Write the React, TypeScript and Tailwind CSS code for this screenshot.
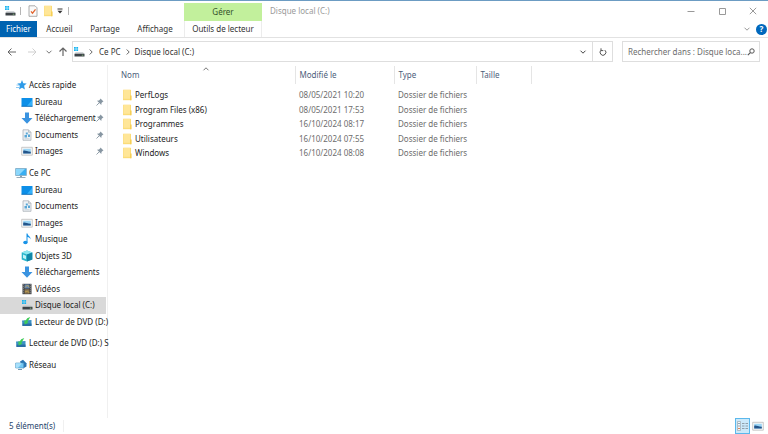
import { useState } from "react";
import type { ReactNode } from "react";

type IconName =
  | "star"
  | "desktop"
  | "download"
  | "document"
  | "picture"
  | "computer"
  | "music"
  | "cube"
  | "video"
  | "drive"
  | "dvd"
  | "network"
  | "folder";

const shapes: Record<IconName, ReactNode> = {
  star: (
    <>
      <path d="M7 1 8.300 4.200l3.400.3-2.600 2.300.8 3.700L7 8.800 4 10.500l.8-3.700L2.300 4.500l3.400-.3z" fill="#2f9be8" />
      <path d="M1.500 6h3M1 8.500h3" stroke="#6bbaf0" strokeWidth=".8" />
    </>
  ),
  desktop: (
    <>
      <path d="M.5 2h11v8.500H.5z" fill="#0d8fe8" />
      <path d="M6 10 11 4v6z" fill="#35b2fb" />
      <path d="M.5 10.300h11" stroke="#0b65ae" strokeWidth=".8" />
    </>
  ),
  download: <path d="M4 .5h4v5.500h3.500L6 11.700.5 6H4z" fill="#3a93e0" />,
  document: (
    <>
      <path d="M2 .8h5.500L10 3.300v8H2z" fill="#eef2f5" stroke="#a4abb1" strokeWidth=".7" />
      <path d="M7.500.8v2.500H10" fill="#d5dade" stroke="#a4abb1" strokeWidth=".6" />
      <path d="M4.800 3.500h2v2h-2zM3.500 6H6v2.500H3.500zM7 5.500h2V8H7z" fill="#5aa7d6" />
      <path d="M3.500 9.800h5" stroke="#b6c5cf" strokeWidth=".7" />
    </>
  ),
  picture: (
    <>
      <path d="M.7 2.300h10.600v7.900H.7z" fill="#f7f7f7" stroke="#b5b5b5" strokeWidth=".7" />
      <path d="M2.200 3.800h7.600v4.800H2.200z" fill="#9bd5f5" />
      <path d="M2.200 5.800c2-.9 3.500.9 7.600.9v1.900H2.200z" fill="#24558a" />
    </>
  ),
  computer: (
    <>
      <path d="M.6 1.500h10.800v7H.6z" fill="#38aef2" stroke="#7fa6bd" strokeWidth=".7" />
      <path d="M1 2h9L4 8H1z" fill="#8bd7fb" />
      <path d="M5 8.800h2V10H5z" fill="#8ca0ad" />
      <path d="M1.500 10.500h9" stroke="#9aacb9" />
    </>
  ),
  music: (
    <>
      <path d="M5.500 9.500V.5h1c.2 2.500 3.500 2.700 3 6-.4-1.500-1.500-2.300-3-2.500v5.500z" fill="#1893e8" />
      <ellipse cx="4.400" cy="9.500" rx="2.200" ry="1.800" fill="#1893e8" />
    </>
  ),
  cube: (
    <>
      <path d="M6 .5 11.300 2.500v7L6 11.600.7 9.500v-7z" fill="#29b4cb" />
      <path d="M6 .5 11.300 2.500 6 4.500.7 2.500z" fill="#8de7ef" />
      <path d="M6 4.500v7.100l5.300-2.100v-7z" fill="#1187a8" />
      <path d="M2 4.500 5 5.700v3.500L2 8z" fill="#c1f3f6" />
    </>
  ),
  video: (
    <>
      <path d="M1.500.8h9v10.400h-9z" fill="#35383d" />
      <path d="M3.500 1.300h5v4.200h-5z" fill="#6585ad" />
      <path d="M3.500 6.300h5v4.400h-5z" fill="#8d7652" />
      <path d="M4 4.500 6.500 2l1.800 2.500M4 9l2.500-1 1.800 2" stroke="#c6a84f" strokeWidth=".8" fill="none" />
      <path d="M2.500 1.300v9.500M9.500 1.300v9.500" stroke="#bbb" strokeWidth=".7" strokeDasharray="1 1" />
    </>
  ),
  drive: (
    <>
      <path d="M1 1h1.800v1.800H1zM3.300 1h1.800v1.800H3.300zM1 3.300h1.800v1.800H1zM3.300 3.300h1.800v1.800H3.300z" fill="#16b4f1" />
      <path d="M2.500 6.300h7.500l1.500 1.700H1.500z" fill="#c9cdd0" />
      <path d="M1.500 7.800h10v2.700h-10z" fill="#3c4247" />
      <path d="M8.800 9.200h1.500" stroke="#9bdd89" strokeWidth=".7" />
    </>
  ),
  dvd: (
    <>
      <path d="M1 4.500 10.500 4v6H1.500z" fill="#3c91c4" />
      <path d="M1.500 7.500h9V10h-9z" fill="#2a6fa5" />
      <path d="M9.300 1 6.200 2.300 4.500 4.800 3.300 4.200 3.600 8.500 7.500 6.700 6.300 6z" fill="#3fcb58" />
    </>
  ),
  network: (
    <>
      <path d="M5 2.500 8 .8l3.500 3.400v3.300L8 9.500z" fill="#2a76b4" />
      <path d="M.7 4h8v5h-8z" fill="#73c8f4" stroke="#4a90bd" strokeWidth=".6" />
      <path d="M1 4.300h6L3 8.700H1z" fill="#a8e0fb" />
      <path d="M3 10.500h4" stroke="#6f98b3" />
    </>
  ),
  folder: (
    <>
      <path d="M2 .8h8v10.400H2z" fill="#fbdc78" />
      <path d="M2.500.8H9v9H2.500z" fill="#ffe698" />
      <path d="M9 6.500h1.600v4.700H9z" fill="#f6cf55" />
    </>
  ),
};

function Icon({ name }: { name: IconName }) {
  return (
    <svg viewBox="0 0 12 12" className="size-3 shrink-0" aria-hidden="true">
      {shapes[name]}
    </svg>
  );
}

type NavItem = { label: string; icon: IconName; root?: boolean; pinned?: boolean };

const groups: NavItem[][] = [
  [
    { label: "Accès rapide", icon: "star", root: true },
    { label: "Bureau", icon: "desktop", pinned: true },
    { label: "Téléchargements", icon: "download", pinned: true },
    { label: "Documents", icon: "document", pinned: true },
    { label: "Images", icon: "picture", pinned: true },
  ],
  [
    { label: "Ce PC", icon: "computer", root: true },
    { label: "Bureau", icon: "desktop" },
    { label: "Documents", icon: "document" },
    { label: "Images", icon: "picture" },
    { label: "Musique", icon: "music" },
    { label: "Objets 3D", icon: "cube" },
    { label: "Téléchargements", icon: "download" },
    { label: "Vidéos", icon: "video" },
    { label: "Disque local (C:)", icon: "drive" },
    { label: "Lecteur de DVD (D:)", icon: "dvd" },
  ],
  [{ label: "Lecteur de DVD (D:) S", icon: "dvd", root: true }],
  [{ label: "Réseau", icon: "network", root: true }],
];

const files = [
  { name: "PerfLogs", date: "08/05/2021 10:20" },
  { name: "Program Files (x86)", date: "08/05/2021 17:53" },
  { name: "Programmes", date: "16/10/2024 08:17" },
  { name: "Utilisateurs", date: "16/10/2024 07:55" },
  { name: "Windows", date: "16/10/2024 08:08" },
];

function Pin() {
  return (
    <svg viewBox="0 0 8 8" className="size-2 shrink-0" aria-hidden="true">
      <path d="M4.500.5 7.500 3.500 6.500 4 5.500 5 5.300 7 1 2.700l2-.2 1-1z" fill="#8796a2" />
      <path d="M3.200 4.800.5 7.500" stroke="#8796a2" strokeWidth=".9" />
    </svg>
  );
}

function Chevron({ className }: { className?: string }) {
  return (
    <svg viewBox="0 0 8 8" className={className} fill="none" stroke="currentColor" aria-hidden="true">
      <path d="m1.500 2.700 2.500 2.500 2.500-2.500" />
    </svg>
  );
}

function TitleBar() {
  return (
    <div className="flex h-5 items-stretch">
      <div className="flex w-[184px] shrink-0 items-center pl-1">
        <Icon name="drive" />
        <span className="ml-1 h-2 w-px bg-[#b5b5b5]" />
        <button aria-label="Propriétés" className="ml-[6px]">
          <svg viewBox="0 0 12 12" className="size-3" fill="none">
            <path d="M2 .8h6l2 2v8.500H2z" fill="#fafafa" stroke="#989898" strokeWidth=".8" />
            <path d="m4 6.300 1.500 1.900 3-3.900" stroke="#e2622b" strokeWidth="1.200" />
          </svg>
        </button>
        <button aria-label="Nouveau dossier" className="ml-[3px]">
          <Icon name="folder" />
        </button>
        <button aria-label="Personnaliser" className="ml-[2px]">
          <svg viewBox="0 0 8 8" className="size-2">
            <path d="M1.500 2h5" stroke="#333" />
            <path d="M1.500 3.800h5L4 6.500z" fill="#333" />
          </svg>
        </button>
        <span className="ml-1 h-2 w-px bg-[#b5b5b5]" />
      </div>
      <div className="mt-[2px] flex w-[78px] shrink-0 items-center justify-center bg-[#c2f09c] text-[#33502a]">Gérer</div>
      <h1 className="ml-2 flex-1 self-center text-[#9a9a9a]">Disque local (C:)</h1>
      <div className="flex items-center text-[#999]">
        <button aria-label="Réduire" className="flex w-[31px] justify-center">
          <svg viewBox="0 0 8 8" className="size-2" stroke="currentColor">
            <path d="M.5 4.500h7" />
          </svg>
        </button>
        <button aria-label="Agrandir" className="flex w-[31px] justify-center">
          <svg viewBox="0 0 8 8" className="size-2" stroke="currentColor" fill="none">
            <path d="M1.500 1.500h6v6h-6z" />
          </svg>
        </button>
        <button aria-label="Fermer" className="flex w-[31px] justify-center">
          <svg viewBox="0 0 8 8" className="size-2" stroke="currentColor">
            <path d="m.8.8 6.400 6.400m0-6.400L.8 7.200" />
          </svg>
        </button>
      </div>
    </div>
  );
}

function Ribbon() {
  return (
    <nav className="flex h-[17px] items-stretch border-b border-[#e2e2e2] text-[#333]">
      <button className="w-[37px] bg-[#0063b1] text-white">Fichier</button>
      <button className="w-[45px]">Accueil</button>
      <button className="w-[46px]">Partage</button>
      <button className="w-[54px]">Affichage</button>
      <button className="ml-[2px] w-[78px] border-x border-[#ececec]">Outils de lecteur</button>
      <div className="ml-auto flex items-center gap-[5px] pr-px">
        <button aria-label="Développer le ruban" className="text-[#999]">
          <Chevron className="size-2" />
        </button>
        <button
          aria-label="Aide"
          className="flex size-[11px] items-center justify-center rounded-full bg-[#0068bd] font-bold text-white"
        >
          ?
        </button>
      </div>
    </nav>
  );
}

function AddressBar() {
  return (
    <div className="flex h-[27px] items-center pr-2 text-[#333]">
      <div className="flex w-[72px] shrink-0 items-center pl-[7px]">
        <button aria-label="Précédent" className="text-[#666]">
          <svg viewBox="0 0 10 10" className="size-[10px]" fill="none" stroke="currentColor">
            <path d="M9 5H1m3.500-3.500L1 5l3.500 3.500" />
          </svg>
        </button>
        <button aria-label="Suivant" className="ml-[10px] text-[#cfcfcf]">
          <svg viewBox="0 0 10 10" className="size-[10px]" fill="none" stroke="currentColor">
            <path d="M1 5h8M5.500 1.500 9 5 5.500 8.500" />
          </svg>
        </button>
        <button aria-label="Emplacements récents" className="ml-2 text-[#777]">
          <Chevron className="size-2" />
        </button>
        <button aria-label="Dossier parent" className="ml-[5px] text-[#666]">
          <svg viewBox="0 0 10 10" className="size-[10px]" fill="none" stroke="currentColor" strokeWidth="1.200">
            <path d="M5 9V1M1.500 4.500 5 1l3.500 3.500" />
          </svg>
        </button>
      </div>
      <div className="flex h-[21px] flex-1 items-center border border-[#dedede]">
        <Icon name="drive" />
        <Chevron className="ml-[2px] size-2 -rotate-90 text-[#666]" />
        <button className="ml-1">Ce PC</button>
        <Chevron className="ml-[3px] size-2 -rotate-90 text-[#666]" />
        <button className="ml-[3px]">Disque local (C:)</button>
        <button aria-label="Historique" className="mr-[5px] ml-auto text-[#444]">
          <Chevron className="size-2" />
        </button>
        <button aria-label="Actualiser" className="flex w-5 items-center justify-center self-stretch border-l border-[#dedede] text-[#555]">
          <svg viewBox="0 0 8 8" className="size-2" fill="none" stroke="currentColor">
            <path d="M2.300 2A2.900 2.900 0 1 0 5.800 2.100M2 .3v2.300h2.300" />
          </svg>
        </button>
      </div>
      <label className="ml-[9px] flex h-[21px] w-[138px] items-center border border-[#dedede] pr-1 pl-[5px]">
        <input
          aria-label="Rechercher"
          placeholder="Rechercher dans : Disque loca..."
          className="min-w-0 flex-1 outline-none placeholder:text-[#6d6d6d]"
        />
        <svg viewBox="0 0 8 8" className="size-2 shrink-0" fill="none" stroke="#555">
          <circle cx="5" cy="3" r="2.200" />
          <path d="M3.400 4.600.8 7.200" strokeWidth="1.200" />
        </svg>
      </label>
    </div>
  );
}

function Sidebar() {
  const [selected, setSelected] = useState("1-8");

  return (
    <aside className="w-[108px] shrink-0 border-r border-[#f0f0f0] pt-3 pr-px">
      <div className="flex flex-col gap-[5px]">
        {groups.map((items, g) => (
          <ul key={g}>
            {items.map((item, i) => (
              <li key={item.label} className="odd:h-[17px] even:h-4">
                <button
                  onClick={() => setSelected(`${g}-${i}`)}
                  className={`flex h-full w-full items-center gap-[2px] pb-px text-left text-[#1c1c1c] ${item.root ? "pl-[15px]" : "pl-[21px]"} ${
                    selected === `${g}-${i}` ? "bg-[#d9d9d9]" : ""
                  }`}
                >
                  <Icon name={item.icon} />
                  <span className="min-w-0 flex-1 whitespace-nowrap">{item.label}</span>
                  {item.pinned && (
                    <span className="bg-white pr-[2px]">
                      <Pin />
                    </span>
                  )}
                </button>
              </li>
            ))}
          </ul>
        ))}
      </div>
    </aside>
  );
}

function FileTable() {
  return (
    <main className="min-w-0 flex-1 pt-px">
      <table className="w-full table-fixed border-collapse text-left">
        <colgroup>
          <col className="w-[187px]" />
          <col className="w-[99px]" />
          <col className="w-[82px]" />
          <col className="w-[55px]" />
          <col />
        </colgroup>
        <thead className="text-[#4c607a]">
          <tr className="h-[18px]">
            <th className="relative border-r border-[#e5e5e5] p-0 pl-[13px] font-normal">
              Nom
              <Chevron className="absolute -top-px left-[94px] size-2 rotate-180 text-[#777]" />
            </th>
            <th className="border-r border-[#e5e5e5] p-0 pl-1 font-normal">Modifié le</th>
            <th className="border-r border-[#e5e5e5] p-0 pl-1 font-normal">Type</th>
            <th className="border-r border-[#e5e5e5] p-0 pl-1 font-normal">Taille</th>
            <th />
          </tr>
        </thead>
        <tbody className="text-[#6d6d6d] before:block before:h-1">
          {files.map((f) => (
            <tr key={f.name} className="odd:h-[14px] even:h-[15px]">
              <td className="p-0 pl-[13px] text-[#1c1c1c]">
                <div className="flex items-center gap-[2px]">
                  <Icon name="folder" />
                  {f.name}
                </div>
              </td>
              <td className="p-0 pl-1">{f.date}</td>
              <td className="p-0 pl-1">Dossier de fichiers</td>
              <td />
              <td />
            </tr>
          ))}
        </tbody>
      </table>
    </main>
  );
}

function StatusBar() {
  return (
    <footer className="flex h-4 items-center justify-between pr-1 pl-[9px] text-[#26446b]">
      <span className="border-r border-[#f0f0f0] pr-2">5 élément(s)</span>
      <div className="flex items-center gap-[2px]">
        <button aria-label="Détails" className="border border-[#5bb8ec] bg-[#cbe9fa]">
          <svg viewBox="0 0 13 14" className="h-[14px] w-[13px]" fill="none">
            <path d="M1.500 2.500h3v9h-3z" fill="#f5f5f5" stroke="#9aa7b0" strokeWidth=".7" />
            <path d="M2 4.500h2M2 7h2" stroke="#8fa8bb" />
            <path d="M2 9.500h2" stroke="#d98962" />
            <path d="M6 4.500h2.500m1 0H12M6 7h2.500m1 0H12M6 9.500h2.500m1 0H12" stroke="#7f8c96" strokeWidth=".8" />
          </svg>
        </button>
        <button aria-label="Grandes icônes">
          <Icon name="picture" />
        </button>
      </div>
    </footer>
  );
}

export default function App() {
  return (
    <div className="flex min-h-screen flex-col overflow-hidden border-t border-[#6c9cc3] bg-white font-['Noto_Sans','Open_Sans',sans-serif] text-[8px] leading-[12px]">
      <TitleBar />
      <Ribbon />
      <AddressBar />
      <div className="flex flex-1">
        <Sidebar />
        <FileTable />
      </div>
      <StatusBar />
    </div>
  );
}
